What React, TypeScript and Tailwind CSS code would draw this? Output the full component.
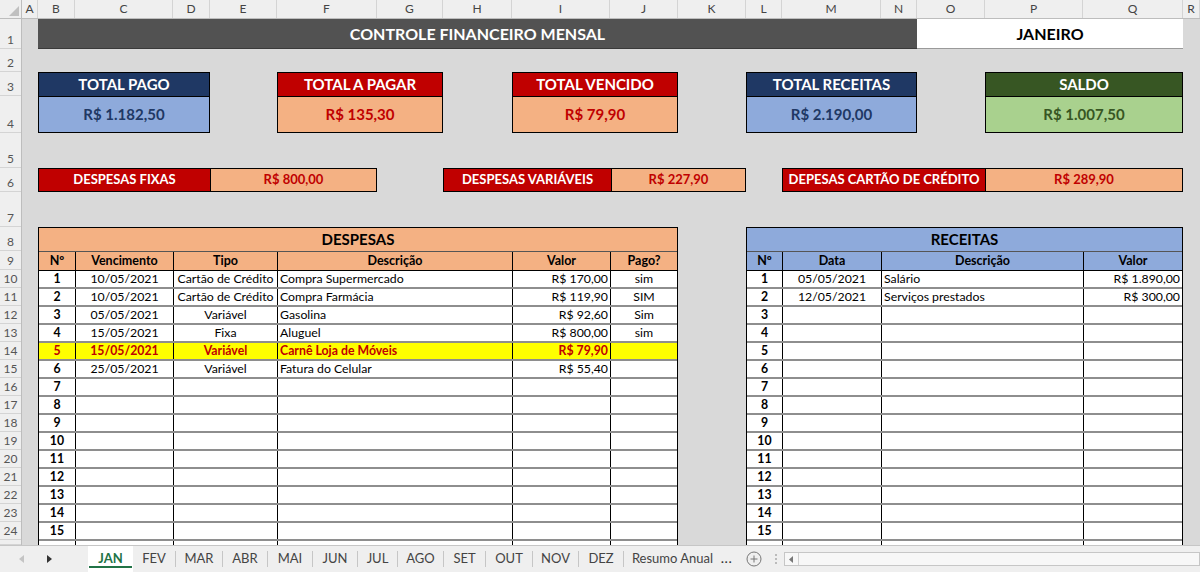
import React from 'react';

const cols = [
  { l: 'A', w: 'w-[16px]' },
  { l: 'B', w: 'w-[37px]' },
  { l: 'C', w: 'w-[98px]' },
  { l: 'D', w: 'w-[37px]' },
  { l: 'E', w: 'w-[67px]' },
  { l: 'F', w: 'w-[100px]' },
  { l: 'G', w: 'w-[66px]' },
  { l: 'H', w: 'w-[69px]' },
  { l: 'I', w: 'w-[98px]' },
  { l: 'J', w: 'w-[68px]' },
  { l: 'K', w: 'w-[68px]' },
  { l: 'L', w: 'w-[36px]' },
  { l: 'M', w: 'w-[99px]' },
  { l: 'N', w: 'w-[36px]' },
  { l: 'O', w: 'w-[68px]' },
  { l: 'P', w: 'w-[98px]' },
  { l: 'Q', w: 'w-[100px]' },
  { l: 'R', w: 'flex-1' },
];

const rowHeads = [
  { n: '1', h: 'h-[30px]' },
  { n: '2', h: 'h-[23px]' },
  { n: '3', h: 'h-[24px]' },
  { n: '4', h: 'h-[37px]' },
  { n: '5', h: 'h-[35px]' },
  { n: '6', h: 'h-[24px]' },
  { n: '7', h: 'h-[35px]' },
  { n: '8', h: 'h-[24px]' },
  { n: '9', h: 'h-[19px]' },
  ...Array.from({ length: 15 }, (_, i) => ({ n: String(i + 10), h: 'h-[18px]' })),
  { n: '', h: 'h-[5px]' },
];

const despesas = [
  { venc: '10/05/2021', tipo: 'Cartão de Crédito', desc: 'Compra Supermercado', valor: 'R$ 170,00', pago: 'sim' },
  { venc: '10/05/2021', tipo: 'Cartão de Crédito', desc: 'Compra Farmácia', valor: 'R$ 119,90', pago: 'SIM' },
  { venc: '05/05/2021', tipo: 'Variável', desc: 'Gasolina', valor: 'R$ 92,60', pago: 'Sim' },
  { venc: '15/05/2021', tipo: 'Fixa', desc: 'Aluguel', valor: 'R$ 800,00', pago: 'sim' },
  { venc: '15/05/2021', tipo: 'Variável', desc: 'Carnê Loja de Móveis', valor: 'R$ 79,90', pago: '', late: true },
  { venc: '25/05/2021', tipo: 'Variável', desc: 'Fatura do Celular', valor: 'R$ 55,40', pago: '' },
];

const receitas = [
  { data: '05/05/2021', desc: 'Salário', valor: 'R$ 1.890,00' },
  { data: '12/05/2021', desc: 'Serviços prestados', valor: 'R$ 300,00' },
];

const tabs = [
  { t: 'FEV', w: 'w-[42px]' },
  { t: 'MAR', w: 'w-[47px]' },
  { t: 'ABR', w: 'w-[45px]' },
  { t: 'MAI', w: 'w-[45px]' },
  { t: 'JUN', w: 'w-[45px]' },
  { t: 'JUL', w: 'w-[40px]' },
  { t: 'AGO', w: 'w-[46px]' },
  { t: 'SET', w: 'w-[42px]' },
  { t: 'OUT', w: 'w-[47px]' },
  { t: 'NOV', w: 'w-[46px]' },
  { t: 'DEZ', w: 'w-[45px]' },
  { t: 'Resumo Anual', w: 'w-[98px]' },
];

function Card({ pos, title, value, head, body, text }: { pos: string; title: string; value: string; head: string; body: string; text: string }) {
  return (
    <div className={`${pos} flex flex-col border border-black`}>
      <div className={`h-[23px] shrink-0 flex items-center justify-center text-white font-bold text-[15px] ${head}`}>{title}</div>
      <div className={`flex-1 flex items-center justify-center font-bold text-[15px] border-t border-black ${body} ${text}`}>{value}</div>
    </div>
  );
}

function Summary({ pos, label, value, lw }: { pos: string; label: string; value: string; lw: string }) {
  return (
    <div className={`${pos} flex border border-black`}>
      <div className={`${lw} shrink-0 bg-[#c00000] text-white font-bold text-[13px] flex items-center justify-center border-r border-black`}>{label}</div>
      <div className="flex-1 bg-[#f4b183] text-[#c00000] font-bold text-[13px] flex items-center justify-center">{value}</div>
    </div>
  );
}

function Despesas() {
  const rows = Array.from({ length: 16 }, (_, i) => ({ n: i + 1, ...(despesas[i] || { venc: '', tipo: '', desc: '', valor: '', pago: '' }) }));
  return (
    <div className="col-[2/11] row-[8/26] flex flex-col overflow-hidden border-x border-t border-black">
      <div className="h-[24px] shrink-0 bg-[#f4b183] flex items-center justify-center font-bold text-[15px] border-b border-[#555]">DESPESAS</div>
      <div className="h-[19px] shrink-0 bg-[#f4b183] flex font-bold text-[12.5px] border-b border-black">
        <div className="w-[37px] shrink-0 border-r border-black flex items-center justify-center">Nº</div>
        <div className="w-[98px] shrink-0 border-r border-black flex items-center justify-center">Vencimento</div>
        <div className="w-[104px] shrink-0 border-r border-black flex items-center justify-center">Tipo</div>
        <div className="w-[235px] shrink-0 border-r border-black flex items-center justify-center">Descrição</div>
        <div className="w-[98px] shrink-0 border-r border-black flex items-center justify-center">Valor</div>
        <div className="flex-1 flex items-center justify-center">Pago?</div>
      </div>
      {rows.map((r) => (
        <div
          key={r.n}
          className={`h-[18px] shrink-0 flex text-[12.3px] border-b-2 border-[#8e8e8e] ${
            'late' in r && r.late ? 'bg-[#ffff00] text-[#c00000] font-bold' : 'bg-white text-black'
          }`}
        >
          <div className="w-[37px] shrink-0 border-r border-black flex items-center justify-center font-bold">{r.n < 16 ? r.n : ''}</div>
          <div className="w-[98px] shrink-0 border-r border-black flex items-center justify-center">{r.venc}</div>
          <div className="w-[104px] shrink-0 border-r border-black flex items-center justify-center whitespace-nowrap">{r.tipo}</div>
          <div className="w-[235px] shrink-0 border-r border-black flex items-center pl-[2px]">{r.desc}</div>
          <div className="w-[98px] shrink-0 border-r border-black flex items-center justify-end pr-[2px]">{r.valor}</div>
          <div className="flex-1 flex items-center justify-center">{r.pago}</div>
        </div>
      ))}
    </div>
  );
}

function Receitas() {
  const rows = Array.from({ length: 16 }, (_, i) => ({ n: i + 1, ...(receitas[i] || { data: '', desc: '', valor: '' }) }));
  return (
    <div className="col-[12/18] row-[8/26] flex flex-col overflow-hidden border-x border-t border-black">
      <div className="h-[24px] shrink-0 bg-[#8eaadb] flex items-center justify-center font-bold text-[15px] border-b border-[#555]">RECEITAS</div>
      <div className="h-[19px] shrink-0 bg-[#8eaadb] flex font-bold text-[12.5px] border-b border-black">
        <div className="w-[36px] shrink-0 border-r border-black flex items-center justify-center">Nº</div>
        <div className="w-[99px] shrink-0 border-r border-black flex items-center justify-center">Data</div>
        <div className="w-[202px] shrink-0 border-r border-black flex items-center justify-center">Descrição</div>
        <div className="flex-1 flex items-center justify-center">Valor</div>
      </div>
      {rows.map((r) => (
        <div key={r.n} className="h-[18px] shrink-0 flex text-[12.3px] bg-white border-b-2 border-[#8e8e8e]">
          <div className="w-[36px] shrink-0 border-r border-black flex items-center justify-center font-bold">{r.n < 16 ? r.n : ''}</div>
          <div className="w-[99px] shrink-0 border-r border-black flex items-center justify-center">{r.data}</div>
          <div className="w-[202px] shrink-0 border-r border-black flex items-center pl-[2px]">{r.desc}</div>
          <div className="flex-1 flex items-center justify-end pr-[2px]">{r.valor}</div>
        </div>
      ))}
    </div>
  );
}

function TabBar() {
  return (
    <div className="h-[27px] shrink-0 flex items-center bg-[#efefef] border-t border-[#c6c6c6] text-[13px] text-[#444]">
      <div className="w-[88px] shrink-0 flex items-center h-full">
        <svg className="ml-[19px]" width="6" height="8" viewBox="0 0 6 8"><path d="M5 0 L0 4 L5 8 Z" fill="#c4c4c4" /></svg>
        <svg className="ml-[22px]" width="6" height="8" viewBox="0 0 6 8"><path d="M0 0 L5 4 L0 8 Z" fill="#333" /></svg>
      </div>
      <div className="w-[45px] shrink-0 h-full bg-white flex items-center justify-center relative">
        <span className="font-bold text-[#217346]">JAN</span>
        <div className="absolute left-[1px] right-[1px] bottom-[4px] h-[2px] bg-[#217346]" />
      </div>
      {tabs.map((t, i) => (
        <div key={t.t} className={`${t.w} shrink-0 flex items-center justify-center h-[16px] ${i > 0 ? 'border-l border-[#c6c6c6]' : ''}`}>
          {t.t}
        </div>
      ))}
      <div className="w-[22px] shrink-0 text-[#333] font-bold text-[12px] tracking-[1px]">...</div>
      <svg className="ml-[3px]" width="16" height="16" viewBox="0 0 16 16">
        <circle cx="8" cy="8" r="7" fill="none" stroke="#777" strokeWidth="1" />
        <path d="M8 4.5 V11.5 M4.5 8 H11.5" stroke="#777" strokeWidth="1" />
      </svg>
      <div className="ml-[13px] flex flex-col gap-[2px]">
        <div className="w-[2px] h-[2px] bg-[#bbb]" />
        <div className="w-[2px] h-[2px] bg-[#bbb]" />
        <div className="w-[2px] h-[2px] bg-[#bbb]" />
      </div>
      <div className="ml-[7px] flex-1 h-[14px] flex items-center border border-[#c6c6c6] bg-[#f7f7f7]">
        <div className="w-[14px] h-full flex items-center justify-center border-r border-[#d0d0d0]">
          <svg width="5" height="7" viewBox="0 0 5 7"><path d="M4 0 L0 3.5 L4 7 Z" fill="#777" /></svg>
        </div>
      </div>
    </div>
  );
}

export default function App() {
  return (
    <div className="w-[1200px] h-[572px] overflow-hidden flex flex-col bg-[#d9d9d9] font-['Lato','Open_Sans',sans-serif] text-black">
      <div className="h-[19px] shrink-0 flex bg-[#efefef] border-b border-[#bdbdbd]">
        <div className="w-[22px] shrink-0 border-r border-[#bdbdbd] flex items-end justify-end p-[2px]">
          <svg width="10" height="10" viewBox="0 0 10 10"><path d="M10 0 L10 10 L0 10 Z" fill="#c0c0c0" /></svg>
        </div>
        {cols.map((c) => (
          <div key={c.l} className={`${c.w} shrink-0 border-r border-[#d4d4d4] flex items-center justify-center text-[12px] text-[#444]`}>
            {c.l}
          </div>
        ))}
      </div>
      <div className="h-[526px] shrink-0 flex">
        <div className="w-[22px] shrink-0 flex flex-col bg-[#efefef] border-r border-[#bdbdbd]">
          {rowHeads.map((r, i) => (
            <div key={i} className={`${r.h} shrink-0 border-b border-[#d4d4d4] flex items-end justify-center text-[12px] leading-none pb-[2px] text-[#555] overflow-hidden`}>
              {r.n}
            </div>
          ))}
        </div>
        <div className="flex-1 grid grid-cols-[16px_37px_98px_37px_67px_100px_66px_69px_98px_68px_68px_36px_99px_36px_68px_98px_100px_1fr] grid-rows-[30px_23px_24px_37px_35px_24px_35px_24px_19px_repeat(15,18px)_5px]">
          <div className="col-[2/15] row-[1/2] bg-[#525252] border-b border-[#3a3a3a] flex items-center justify-center text-white font-bold text-[16px]">
            CONTROLE FINANCEIRO MENSAL
          </div>
          <div className="col-[15/18] row-[1/2] bg-white border-b border-[#9a9a9a] flex items-center justify-center font-bold text-[16px]">
            JANEIRO
          </div>

          <Card pos="col-[2/5] row-[3/5]" title="TOTAL PAGO" value="R$ 1.182,50" head="bg-[#1f3864]" body="bg-[#8eaadb]" text="text-[#203864]" />
          <Card pos="col-[6/8] row-[3/5]" title="TOTAL A PAGAR" value="R$ 135,30" head="bg-[#c00000]" body="bg-[#f4b183]" text="text-[#c00000]" />
          <Card pos="col-[9/11] row-[3/5]" title="TOTAL VENCIDO" value="R$ 79,90" head="bg-[#c00000]" body="bg-[#f4b183]" text="text-[#c00000]" />
          <Card pos="col-[12/15] row-[3/5]" title="TOTAL RECEITAS" value="R$ 2.190,00" head="bg-[#1f3864]" body="bg-[#8eaadb]" text="text-[#203864]" />
          <Card pos="col-[16/18] row-[3/5]" title="SALDO" value="R$ 1.007,50" head="bg-[#375623]" body="bg-[#a9d18e]" text="text-[#375623]" />

          <Summary pos="col-[2/7] row-[6/7]" label="DESPESAS FIXAS" value="R$ 800,00" lw="w-[172px]" />
          <Summary pos="col-[8/12] row-[6/7]" label="DESPESAS VARIÁVEIS" value="R$ 227,90" lw="w-[168px]" />
          <Summary pos="col-[13/18] row-[6/7]" label="DEPESAS CARTÃO DE CRÉDITO" value="R$ 289,90" lw="w-[203px]" />

          <Despesas />
          <Receitas />
        </div>
      </div>
      <TabBar />
    </div>
  );
}
